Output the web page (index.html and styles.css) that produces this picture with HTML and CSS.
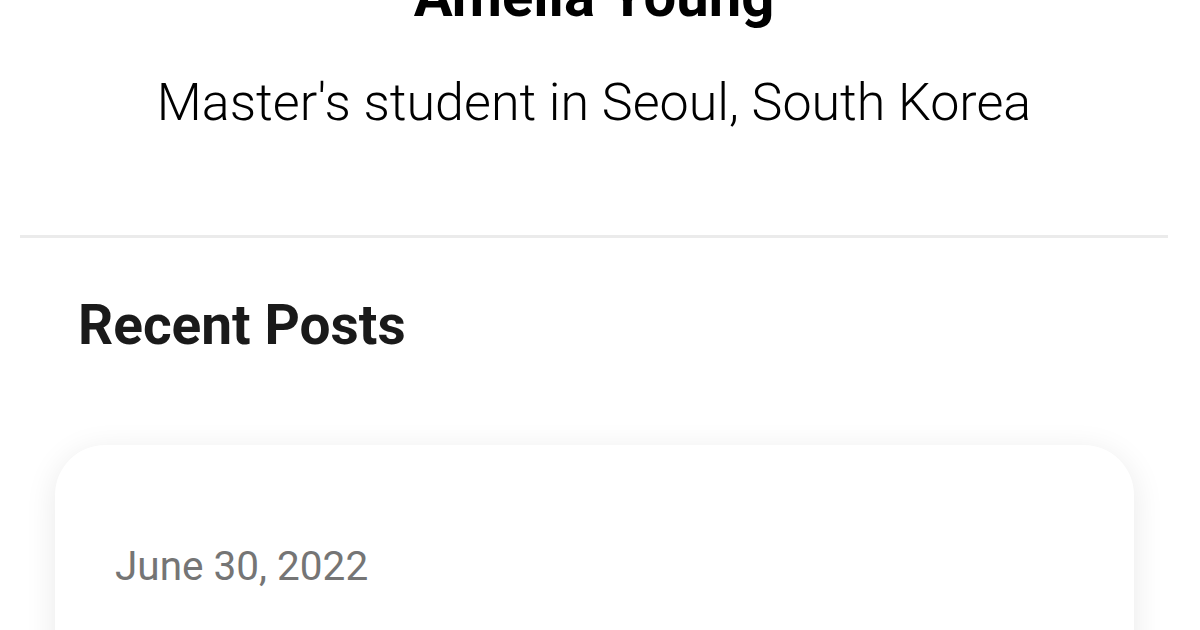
FILE: index.html
```html
<!DOCTYPE html>
<html lang="en">
<head>
  <meta charset="UTF-8">
  <title>Amelia Young</title>
  <link rel="stylesheet" href="styles.css">
</head>
<body>

  <header class="profile">
    <h1 class="profile-name">Amelia Young</h1>
    <p class="profile-bio">Master's student in Seoul, South Korea</p>
  </header>

  <hr class="divider">

  <section class="posts">
    <h2 class="posts-title">Recent Posts</h2>
    <article class="post-card">
      <div class="post-date">June 30, 2022</div>
    </article>
  </section>

</body>
</html>
```

FILE: styles.css
```css
body {
  margin: 0;
  background-color: #fff;
  color: #000;
  font-family: 'Roboto', 'Noto Sans', sans-serif;
  overflow: hidden;
}
.profile {
  text-align: center;
  padding-right: 12px;
}
.profile-name {
  font-size: 58px;
  font-weight: 700;
  line-height: 72px;
  margin: -40px 0 0;
}
.profile-bio {
  font-size: 52px;
  font-weight: 300;
  line-height: 62px;
  margin: 40px 0 0;
}
.divider {
  border: none;
  height: 3px;
  background-color: #ebebeb;
  margin: 101px 32px 0 20px;
}
.posts {
  padding: 0 66px 0 55px;
}
.posts-title {
  font-size: 55px;
  font-weight: 700;
  color: #1a1a1a;
  line-height: 66px;
  margin: 54px 0 0 23px;
}
.post-card {
  margin-top: 87px;
  background-color: #fff;
  border-radius: 50px;
  box-shadow: 0 6px 32px rgba(0, 0, 0, 0.09);
  padding: 97px 60px 60px;
  min-height: 200px;
}
.post-date {
  font-size: 40.5px;
  line-height: 48px;
  color: #757575;
}
```
